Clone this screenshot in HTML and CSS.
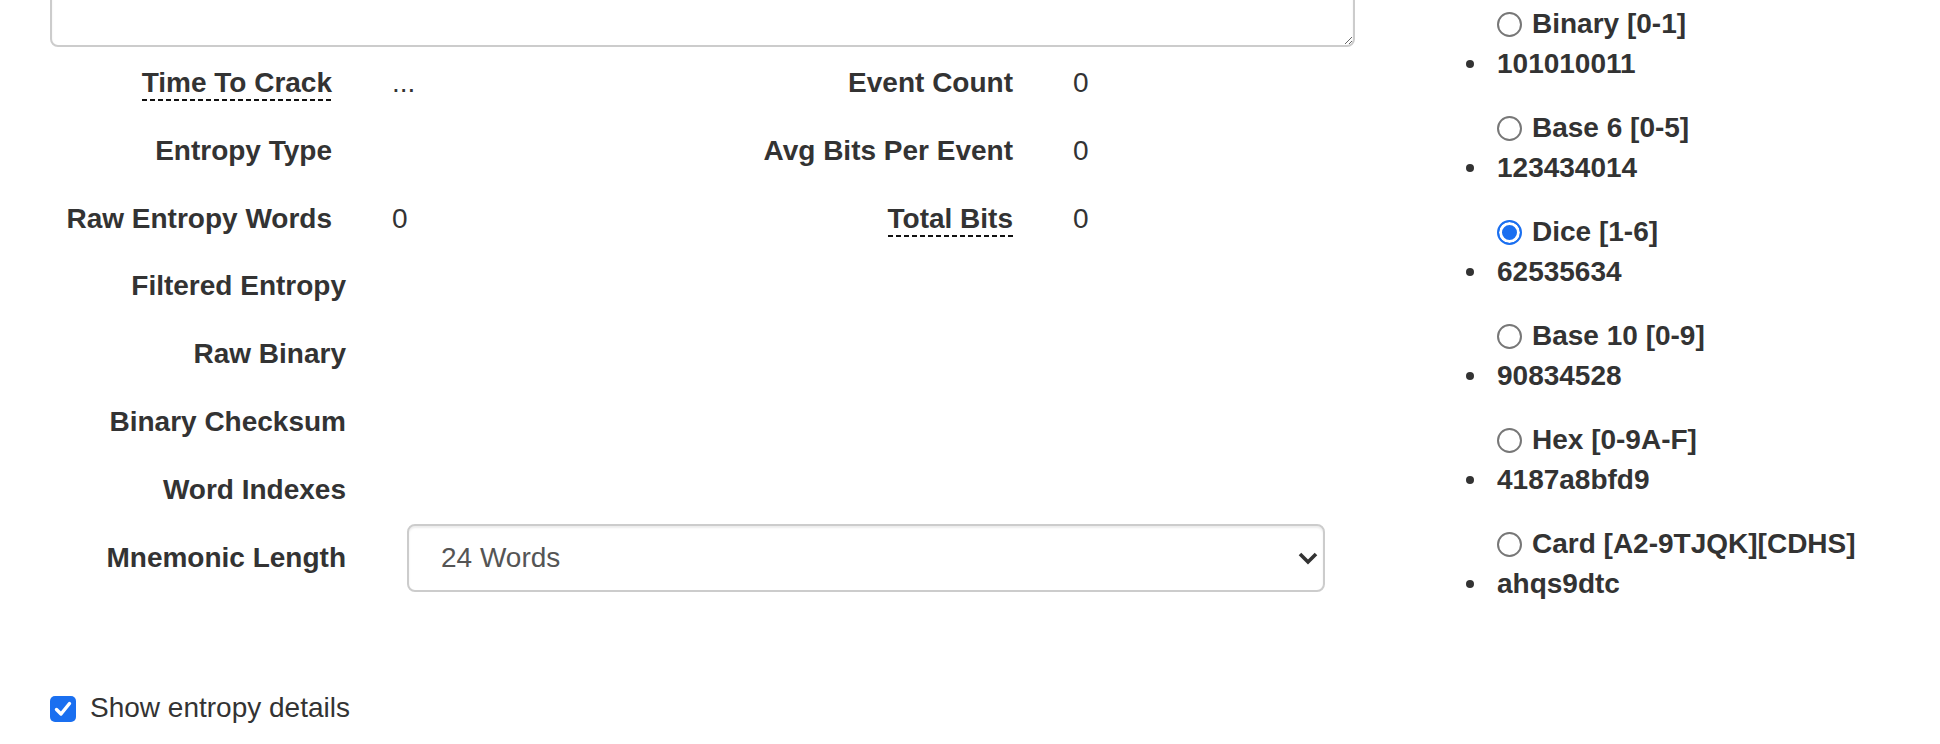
FILE: index.html
```html
<!DOCTYPE html>
<html lang="en">
<head>
<meta charset="utf-8">
<title>Entropy</title>
<link rel="stylesheet" href="styles.css">
</head>
<body>
<div class="page">
  <div class="main">
    <textarea class="entropy-input"></textarea>
    <div class="stats">
      <div class="lbl"><span class="abbr">Time To Crack</span></div>
      <div class="val">...</div>
      <div class="lbl">Event Count</div>
      <div class="val">0</div>
      <div class="lbl">Entropy Type</div>
      <div class="val"></div>
      <div class="lbl">Avg Bits Per Event</div>
      <div class="val">0</div>
      <div class="lbl">Raw Entropy Words</div>
      <div class="val">0</div>
      <div class="lbl"><span class="abbr">Total Bits</span></div>
      <div class="val">0</div>
    </div>
    <div class="details">
      <div class="lbl">Filtered Entropy</div>
      <div class="val"></div>
      <div class="lbl">Raw Binary</div>
      <div class="val"></div>
      <div class="lbl">Binary Checksum</div>
      <div class="val"></div>
      <div class="lbl">Word Indexes</div>
      <div class="val"></div>
      <div class="lbl">Mnemonic Length</div>
      <div class="val">
        <div class="select-wrap">
          <select class="mnemonic-length">
            <option>24 Words</option>
          </select>
          <svg class="chevron" width="22" height="14" viewBox="0 0 22 14"><path d="M3 3 L11 11 L19 3" fill="none" stroke="#333" stroke-width="3.6"/></svg>
        </div>
      </div>
    </div>
    <label class="check">
      <svg class="checkbox" width="26" height="26" viewBox="0 0 26 26"><rect x="0" y="0" width="26" height="26" rx="5" fill="#1a6ff0"/><path d="M6.5 13.5 L11 18 L19.5 7.5" fill="none" stroke="#fff" stroke-width="3.4" stroke-linecap="round" stroke-linejoin="round"/></svg>
      <span>Show entropy details</span>
    </label>
  </div>
  <div class="types">
    <div class="type">
      <label class="type-label"><input type="radio" name="etype"> Binary [0-1]</label>
      <ul class="example"><li>101010011</li></ul>
    </div>
    <div class="type">
      <label class="type-label"><input type="radio" name="etype"> Base 6 [0-5]</label>
      <ul class="example"><li>123434014</li></ul>
    </div>
    <div class="type">
      <label class="type-label"><input type="radio" name="etype" checked> Dice [1-6]</label>
      <ul class="example"><li>62535634</li></ul>
    </div>
    <div class="type">
      <label class="type-label"><input type="radio" name="etype"> Base 10 [0-9]</label>
      <ul class="example"><li>90834528</li></ul>
    </div>
    <div class="type">
      <label class="type-label"><input type="radio" name="etype"> Hex [0-9A-F]</label>
      <ul class="example"><li>4187a8bfd9</li></ul>
    </div>
    <div class="type">
      <label class="type-label"><input type="radio" name="etype"> Card [A2-9TJQK][CDHS]</label>
      <ul class="example"><li>ahqs9dtc</li></ul>
    </div>
  </div>
</div>
</body>
</html>
```

FILE: styles.css
```css
html, body {
  margin: 0;
  padding: 0;
  background: #fff;
  overflow: hidden;
}

body {
  font-family: "Liberation Sans", Arial, sans-serif;
  font-size: 28px;
  color: #333;
}

.page {
  display: flex;
  align-items: flex-start;
  height: 744px;
}

.main {
  width: 1305px;
  margin-left: 50px;
  flex: none;
}

.entropy-input {
  display: block;
  box-sizing: border-box;
  width: 100%;
  height: 100px;
  margin: -53px 0 0 0;
  border: 2px solid #ccc;
  border-radius: 8px;
  box-shadow: inset 0 2px 2px rgba(0, 0, 0, 0.075);
  font: inherit;
  background: #fff;
}

.stats {
  display: grid;
  grid-template-columns: 282px 280px 281px 1fr;
  column-gap: 60px;
  grid-auto-rows: 68px;
  margin-top: 2px;
  line-height: 68px;
}

.details {
  display: grid;
  grid-template-columns: 296px 1fr;
  column-gap: 61px;
  grid-auto-rows: 68px;
  margin-top: -1px;
  padding-right: 30px;
  line-height: 68px;
}

.lbl {
  font-weight: bold;
  text-align: right;
  white-space: nowrap;
}

.val {
  white-space: nowrap;
}

.abbr {
  padding-bottom: 3px;
  background-image: repeating-linear-gradient(to right, #111 0 5px, transparent 5px 8px);
  background-size: 100% 2px;
  background-position: left bottom;
  background-repeat: no-repeat;
}

.select-wrap {
  position: relative;
  height: 68px;
}

.mnemonic-length {
  -webkit-appearance: none;
  appearance: none;
  box-sizing: border-box;
  display: block;
  width: 100%;
  height: 68px;
  margin: 0;
  padding: 0 0 0 32px;
  border: 2px solid #ccc;
  border-radius: 8px;
  box-shadow: inset 0 2px 2px rgba(0, 0, 0, 0.075);
  background: #fff;
  font-family: "Liberation Sans", Arial, sans-serif;
  font-size: 28px;
  line-height: 64px;
  color: #555;
}

.chevron {
  position: absolute;
  right: 6px;
  top: 27px;
  pointer-events: none;
}

.check {
  display: flex;
  align-items: center;
  gap: 14px;
  margin-top: 96px;
  line-height: 40px;
}

.checkbox {
  display: block;
  flex: none;
  margin-top: 2px;
}

.types {
  margin-left: 111px;
  padding-top: 3px;
  font-weight: bold;
  flex: none;
}

.type {
  margin-bottom: 23px;
}

.type-label {
  display: flex;
  align-items: center;
  gap: 10px;
  line-height: 41px;
  padding-left: 31px;
  white-space: nowrap;
}

.type-label input {
  -webkit-appearance: none;
  appearance: none;
  box-sizing: border-box;
  width: 25px;
  height: 25px;
  margin: 2px 0 0 0;
  border: 2px solid #777;
  border-radius: 50%;
  background: #fff;
  flex: none;
}

.type-label input:checked {
  border: 2.5px solid #1a6ff0;
  background: #1a6ff0;
  box-shadow: inset 0 0 0 3px #fff;
}

.example {
  list-style: none;
  margin: 0;
  padding: 0;
}

.example li {
  display: flex;
  align-items: center;
  line-height: 40px;
}

.example li::before {
  content: "";
  width: 8px;
  height: 8px;
  border-radius: 50%;
  background: #333;
  margin-right: 23px;
  flex: none;
}
```
